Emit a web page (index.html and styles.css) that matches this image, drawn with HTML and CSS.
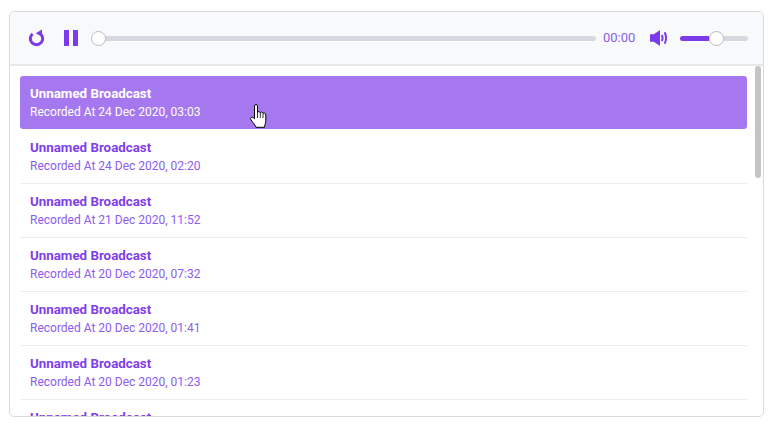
FILE: index.html
```html
<!DOCTYPE html>
<html lang="en">
<head>
<meta charset="utf-8">
<title>Broadcasts</title>
<link rel="stylesheet" href="styles.css">
</head>
<body>
<main class="card">
  <header class="player">
    <svg class="icon-replay" viewBox="0 0 16 16"><path class="replay-ring" d="M3.600 3.800A6.200 6.200 0 1 0 11.400 3.800"/><path class="replay-head" d="M6.800 3.300 13-.6V6.800Z"/></svg>
    <div class="pause"><span class="pause-bar"></span><span class="pause-bar"></span></div>
    <div class="seek"><span class="knob"></span><span class="seek-track"></span></div>
    <span class="time">00:00</span>
    <svg class="icon-volume" viewBox="0 0 18 16"><path class="speaker" d="M0 4.200H3.800L10 0V16L3.800 11.800H0Z"/><path class="wave" d="M11.800 5Q13.300 8 11.800 11M14.600 2.300Q17.600 8 14.600 13.700"/></svg>
    <div class="volume">
      <span class="volume-fill"></span>
      <span class="knob"></span>
      <span class="volume-rest"></span>
    </div>
  </header>
  <div class="body">
    <ul class="list">
      <li class="row row-active">
        <div class="row-title">Unnamed Broadcast</div>
        <div class="row-sub">Recorded At 24 Dec 2020, 03:03</div>
      </li>
      <li class="row">
        <div class="row-title">Unnamed Broadcast</div>
        <div class="row-sub">Recorded At 24 Dec 2020, 02:20</div>
      </li>
      <li class="row">
        <div class="row-title">Unnamed Broadcast</div>
        <div class="row-sub">Recorded At 21 Dec 2020, 11:52</div>
      </li>
      <li class="row">
        <div class="row-title">Unnamed Broadcast</div>
        <div class="row-sub">Recorded At 20 Dec 2020, 07:32</div>
      </li>
      <li class="row">
        <div class="row-title">Unnamed Broadcast</div>
        <div class="row-sub">Recorded At 20 Dec 2020, 01:41</div>
      </li>
      <li class="row">
        <div class="row-title">Unnamed Broadcast</div>
        <div class="row-sub">Recorded At 20 Dec 2020, 01:23</div>
      </li>
      <li class="row">
        <div class="row-title">Unnamed Broadcast</div>
      </li>
    </ul>
    <div class="scrollbar"><span class="thumb"></span></div>
    <svg class="cursor" viewBox="0 0 17 24"><path class="hand" d="M4.500 1.800C4.500.2 7.500.2 7.500 1.800V8.500C8 7.300 10 7.300 10.300 8.700 10.800 7.700 12.700 7.900 13 9.300 13.700 8.700 15.800 9 15.800 11V16.500C15.800 18.800 15 20 14.500 23.300H6C5 20.500 2.500 18.500.8 15.500 0 13.800 2 12.300 3.200 13.500L4.500 14.800Z"/><path class="hand-lines" d="M7.500 8.500V14M10.300 8.700V14M13 9.300V14"/></svg>
  </div>
</main>
</body>
</html>
```
FILE: styles.css
```css
* { box-sizing: border-box; }
html, body { margin: 0; height: 100%; background: #fff; overflow: hidden; }
body { padding: 11px 13px 14px 9px; font-family: Roboto, sans-serif; color: #7f40ea; }
.card { height: 406px; display: flex; flex-direction: column; border: 1px solid #d9dbe1; border-radius: 5px; overflow: hidden; background: #fff; }
.player { flex: none; height: 54px; display: flex; align-items: center; background: #f8f9fb; border-bottom: 2px solid #e5e7eb; padding: 0 15px 0 19px; }
.icon-replay { width: 16px; height: 16px; flex: none; overflow: visible; }
.replay-ring { fill: none; stroke: #7c3aed; stroke-width: 3; }
.replay-head { fill: #7c3aed; }
.pause { display: flex; gap: 4px; margin-left: 19px; flex: none; }
.pause-bar { width: 5px; height: 16px; background: #7c3aed; display: block; }
.seek { flex: 1; display: flex; align-items: center; margin-left: 13px; }
.seek-track { flex: 1; height: 5px; background: #d6d8e0; border-radius: 0 3px 3px 0; margin-left: -1px; }
.knob { flex: none; display: block; width: 15px; height: 15px; border-radius: 50%; background: #fff; border: 1px solid #b9bbc4; position: relative; z-index: 1; }
.time { flex: none; margin-left: 7px; font-size: 13px; line-height: 16px; color: #8b5cf0; width: 33px; }
.icon-volume { flex: none; width: 18px; height: 16px; margin-left: 14px; }
.speaker { fill: #7c3aed; }
.wave { fill: none; stroke: #7c3aed; stroke-width: 2; }
.volume { flex: none; display: flex; align-items: center; width: 68px; margin-left: 12px; }
.volume-fill { width: 29px; height: 5px; background: #7c3aed; border-radius: 3px 0 0 3px; }
.volume-rest { flex: 1; height: 5px; background: #d6d8e0; border-radius: 0 3px 3px 0; }
.body { flex: 1; min-height: 0; display: flex; position: relative; }
.list { flex: 1; min-width: 0; list-style: none; margin: 0; padding: 10px 8px 0 10px; overflow: hidden; }
.row { height: 54px; padding: 9px 10px 0; border-bottom: 1px solid #ececf0; }
.row-active { height: 53px; background: #a678f0; color: #fff; border-bottom: 0; border-radius: 3px; margin-bottom: 1px; }
.row-title { font-size: 13.330px; font-weight: 700; line-height: 18px; }
.row-sub { font-size: 12px; line-height: 18px; color: #8b5cf0; }
.row-active .row-sub { color: #fff; }
.scrollbar { flex: none; width: 16px; padding: 0 2px 0 8px; margin-left: -8px; }
.thumb { display: block; width: 6px; height: 112px; background: #c4c4c4; border-radius: 3px; }
.cursor { position: absolute; left: 240px; top: 38px; width: 17px; height: 24px; }
.hand { fill: #fff; stroke: #000; stroke-width: 1; stroke-linejoin: round; }
.hand-lines { fill: none; stroke: #000; stroke-width: .8; }
```
